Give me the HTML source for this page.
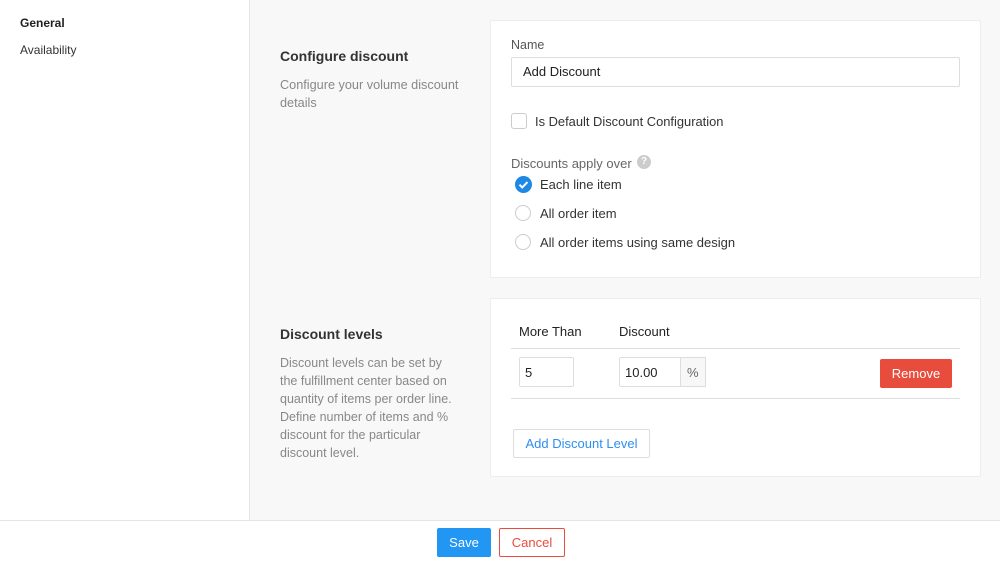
<!DOCTYPE html>
<html><head><style>
*{box-sizing:border-box;margin:0;padding:0}
body{width:1000px;height:570px;font-family:"Liberation Sans",sans-serif;font-size:14px;color:#333;background:#f8f8f8;position:relative;overflow:hidden}
.abs{position:absolute}
.side{left:0;top:0;width:250px;height:520px;background:#fff;border-right:1px solid #e6e6e6}
.card{background:#fff;border:1px solid #ececec;border-radius:2px}
.inp{border:1px solid #ddd;border-radius:2px;background:#fff}
.t{white-space:nowrap}
.radio{width:16px;height:16px;border:1px solid #ccc;border-radius:50%;background:#fff}
.footer{left:0;top:520px;width:1000px;height:50px;background:#fff;border-top:1px solid #e6e6e6}
</style></head><body>
<div class="abs side"></div>
<div class="abs t" style="left:20px;top:16px;font-size:12px;font-weight:bold;color:#222">General</div>
<div class="abs t" style="left:20px;top:43px;font-size:12px;color:#333">Availability</div>

<div class="abs t" style="left:280px;top:48px;font-size:14px;font-weight:bold;color:#333">Configure discount</div>
<div class="abs" style="left:280px;top:76px;width:190px;font-size:12.7px;color:#888;line-height:18px">Configure your volume discount details</div>

<div class="abs card" style="left:490px;top:20px;width:491px;height:258px"></div>
<div class="abs t" style="left:511px;top:38px;font-size:12.5px;color:#555">Name</div>
<div class="abs inp" style="left:511px;top:57px;width:449px;height:30px"></div>
<div class="abs t" style="left:523px;top:64px;font-size:13px;color:#222">Add Discount</div>
<div class="abs inp" style="left:511px;top:113px;width:16px;height:16px;border-color:#ccc;border-radius:3px"></div>
<div class="abs t" style="left:535px;top:114px;font-size:12.9px;color:#333">Is Default Discount Configuration</div>
<div class="abs t" style="left:511px;top:156px;font-size:13px;color:#666">Discounts apply over</div>
<div class="abs" style="left:637px;top:155px;width:14px;height:14px;border-radius:50%;background:#ccc;color:#fff;font-size:10px;font-weight:bold;text-align:center;line-height:14px">?</div>
<svg class="abs" style="left:515px;top:176px" width="17" height="17" viewBox="0 0 17 17"><circle cx="8.5" cy="8.5" r="8.5" fill="#1e88e5"/><path d="M4.5 8.7l2.7 2.7 5.3-5.3" stroke="#fff" stroke-width="2" fill="none"/></svg>
<div class="abs t" style="left:540px;top:177px;font-size:13px;color:#333">Each line item</div>
<div class="abs radio" style="left:515px;top:205px"></div>
<div class="abs t" style="left:540px;top:206px;font-size:13px;color:#333">All order item</div>
<div class="abs radio" style="left:515px;top:234px"></div>
<div class="abs t" style="left:540px;top:235px;font-size:13px;color:#333">All order items using same design</div>

<div class="abs t" style="left:280px;top:326px;font-size:14px;font-weight:bold;color:#333">Discount levels</div>
<div class="abs" style="left:280px;top:354px;width:178px;font-size:12.5px;color:#888;line-height:18px">Discount levels can be set by the fulfillment center based on quantity of items per order line. Define number of items and % discount for the particular discount level.</div>

<div class="abs card" style="left:490px;top:298px;width:491px;height:179px"></div>
<div class="abs t" style="left:519px;top:324px;font-size:13px;color:#222">More Than</div>
<div class="abs t" style="left:619px;top:324px;font-size:13px;color:#222">Discount</div>
<div class="abs" style="left:511px;top:348px;width:449px;height:1px;background:#ddd"></div>
<div class="abs inp" style="left:519px;top:357px;width:55px;height:30px"></div>
<div class="abs t" style="left:525px;top:365px;font-size:13px;color:#222">5</div>
<div class="abs inp" style="left:619px;top:357px;width:87px;height:30px"></div>
<div class="abs" style="left:680px;top:357px;width:26px;height:30px;background:#f7f7f7;border:1px solid #ddd"></div>
<div class="abs t" style="left:625px;top:365px;font-size:13px;color:#222">10.00</div>
<div class="abs t" style="left:687px;top:365px;font-size:13px;color:#666">%</div>
<div class="abs" style="left:880px;top:359px;width:72px;height:29px;background:#e84c3d;border-radius:2px;color:#fff;font-size:13px;text-align:center;line-height:29px">Remove</div>
<div class="abs" style="left:511px;top:398px;width:449px;height:1px;background:#ddd"></div>
<div class="abs" style="left:513px;top:429px;width:137px;height:29px;border:1px solid #ddd;border-radius:2px;background:#fff;color:#2d8ef0;font-size:13px;text-align:center;line-height:27px">Add Discount Level</div>

<div class="abs footer"></div>
<div class="abs" style="left:437px;top:528px;width:54px;height:29px;background:#2196f3;border-radius:2px;color:#fff;font-size:13px;text-align:center;line-height:29px">Save</div>
<div class="abs" style="left:499px;top:528px;width:66px;height:29px;border:1px solid #e84c3d;border-radius:2px;background:#fff;color:#e84c3d;font-size:13px;text-align:center;line-height:27px">Cancel</div>
</body></html>
